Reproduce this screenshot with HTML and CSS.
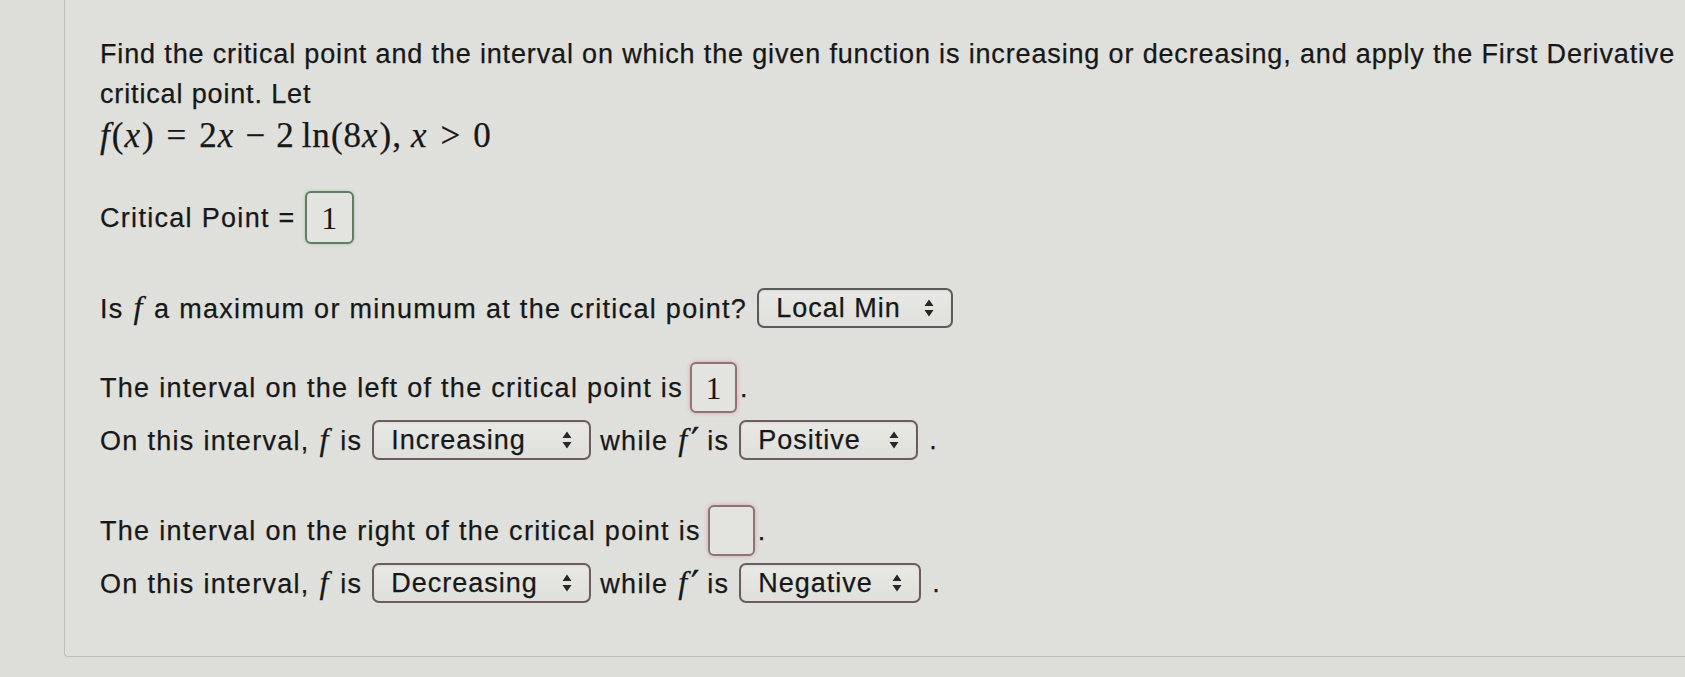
FILE: index.html
```html
<!DOCTYPE html>
<html lang="en">
<head>
    <meta charset="UTF-8">
    <meta name="viewport" content="width=device-width, initial-scale=1.0">
    <title>Critical Point</title>
    <link rel="stylesheet" href="styles.css">
</head>
<body>
    <div class="screen">
        <div class="panel">
            <p class="intro">Find the critical point and the interval on which the given function is increasing or decreasing, and apply the First Derivative<br>critical point. Let</p>

            <div class="formula">
                <span class="mi">f</span>(<span class="mi">x</span>)<span class="rel">=</span>2<span class="mi">x</span><span class="bin">&minus;</span>2<span class="fn">ln</span>(8<span class="mi">x</span>),<span class="mi gap">x</span><span class="rel">&gt;</span>0
            </div>

            <div class="row row-critical">
                <span>Critical Point =</span>
                <span class="ans ans-ok">1</span>
            </div>

            <div class="row row-minmax">
                <span>Is <span class="mi">f</span> a maximum or minumum at the critical point?</span>
                <span class="sel sel-minmax">Local Min
                    <svg class="arrows" viewBox="0 0 12 20" width="12" height="20"><path d="M1.5 8 L6 1.5 L10.5 8 Z M1.5 12 L6 18.5 L10.5 12 Z"/></svg>
                </span>
            </div>

            <div class="row row-left">
                <span>The interval on the left of the critical point is</span>
                <span class="ans ans-bad">1</span><span class="dot">.</span>
            </div>
            <div class="row row-behave">
                <span>On this interval, <span class="mi">f</span> is</span>
                <span class="sel sel-dir sel-bad">Increasing
                    <svg class="arrows" viewBox="0 0 12 20" width="12" height="20"><path d="M1.5 8 L6 1.5 L10.5 8 Z M1.5 12 L6 18.5 L10.5 12 Z"/></svg>
                </span>
                <span>while <span class="mi mi-d">f<span class="prime">&prime;</span></span>is</span>
                <span class="sel sel-sign sel-bad">Positive
                    <svg class="arrows" viewBox="0 0 12 20" width="12" height="20"><path d="M1.5 8 L6 1.5 L10.5 8 Z M1.5 12 L6 18.5 L10.5 12 Z"/></svg>
                </span>
                <span class="end">.</span>
            </div>

            <div class="row row-right">
                <span>The interval on the right of the critical point is</span>
                <span class="ans ans-bad"></span><span class="dot">.</span>
            </div>
            <div class="row row-behave row-last">
                <span>On this interval, <span class="mi">f</span> is</span>
                <span class="sel sel-dir sel-bad">Decreasing
                    <svg class="arrows" viewBox="0 0 12 20" width="12" height="20"><path d="M1.5 8 L6 1.5 L10.5 8 Z M1.5 12 L6 18.5 L10.5 12 Z"/></svg>
                </span>
                <span>while <span class="mi mi-d">f<span class="prime">&prime;</span></span>is</span>
                <span class="sel sel-sign sel-wide sel-bad">Negative
                    <svg class="arrows" viewBox="0 0 12 20" width="12" height="20"><path d="M1.5 8 L6 1.5 L10.5 8 Z M1.5 12 L6 18.5 L10.5 12 Z"/></svg>
                </span>
                <span class="end">.</span>
            </div>
        </div>
    </div>
</body>
</html>
```

FILE: styles.css
```css
body {
    margin: 0;
    height: 677px;
    overflow: hidden;
    background: #dcdcd9; /* page behind the card */
    font-family: 'Liberation Sans', Arial, sans-serif;
    color: #171717;
}

.screen {
    display: flex;
    height: 100%;
}

.panel {
    flex: 1;
    margin-left: 64px;
    height: 657px;
    box-sizing: border-box;
    padding: 34px 0 0 35px;
    background: #dfdfdc;
    border-left: 1px solid #bdbdba;
    border-bottom: 1px solid #bdbdba;
    border-bottom-left-radius: 4px;
    font-size: 27px;
    letter-spacing: 1.3px;
    -webkit-text-stroke: 0.25px currentColor; /* photo makes the text look heavier */
}

.intro {
    margin: 0;
    line-height: 40px;
    letter-spacing: 0.85px;
    white-space: nowrap;
}

/* math, roughly the look of a TeX renderer */
.formula {
    height: 44px;
    line-height: 44px;
    font-family: 'Liberation Serif', 'Times New Roman', serif;
    font-size: 35px;
    letter-spacing: 1px;
    white-space: nowrap;
}

.mi {
    font-family: 'Liberation Serif', 'Times New Roman', serif;
    font-style: italic;
    font-size: 32px;
    letter-spacing: 0;
    margin: 0 3px 0 1px;
}

.mi-d {
    margin-right: 8px;
}

.formula .mi {
    font-size: 35px;
    margin: 0 2px 0 0;
}

.formula .mi.gap {
    margin-left: 9px;
}

.rel {
    margin: 0 12px;
}

.bin {
    margin: 0 10px;
}

.fn {
    margin-left: 7px;
}

.prime {
    display: inline-block;
    font-family: 'DejaVu Sans', sans-serif;
    font-style: normal;
    font-size: 36px;
    line-height: 0;
    vertical-align: -3px;
    margin-left: 4px;
    -webkit-text-stroke: 0.5px currentColor;
}

.row {
    display: flex;
    align-items: center;
    line-height: 40px;
    white-space: nowrap;
}

.row-critical { margin-top: 33px; }
.row-minmax   { margin-top: 43px; }
.row-left     { margin-top: 33px; }
.row-right    { margin-top: 44px; }
.row-behave   { margin-top: 6px; }
.row-last     { margin-top: 6px; }

/* answer blanks */
.ans {
    display: inline-flex;
    align-items: center;
    justify-content: center;
    width: 47px;
    height: 51px;
    box-sizing: border-box;
    margin-left: 7px;
    border-radius: 6px;
    background: #e3e3e0;
    font-family: 'Liberation Serif', 'Times New Roman', serif;
    font-size: 32px;
    letter-spacing: 0;
    -webkit-text-stroke: 0;
}

.ans-ok {
    width: 49px;
    height: 53px;
    margin-left: 9px;
    border: 2px solid #5f7f60;
    box-shadow: 0 0 3px rgba(90, 160, 90, 0.45);
}

.ans-bad {
    border: 2px solid #8f7375;
    box-shadow: 0 0 4px rgba(210, 90, 105, 0.45);
}

.dot {
    margin-left: 3px;
}

.end {
    margin-left: 2px;
}

/* dropdowns */
.sel {
    display: inline-flex;
    align-items: center;
    justify-content: space-between;
    height: 40px;
    box-sizing: border-box;
    padding: 0 16px 0 17px;
    margin: 0 9px 0 10px;
    border: 2px solid #5a5a5a;
    border-radius: 7px;
    background: linear-gradient(#e8e8e5, #dfdfdc);
    box-shadow: inset 0 1px 2px rgba(0, 0, 0, 0.08);
    letter-spacing: 1px;
}

.sel-bad {
    border-color: #6f5b5d;
}

.sel-minmax { width: 196px; }
.sel-dir    { width: 219px; }
.sel-sign   { width: 179px; }
.sel-wide   { width: 182px; }

.arrows {
    fill: #262626;
    flex: none;
}
```
